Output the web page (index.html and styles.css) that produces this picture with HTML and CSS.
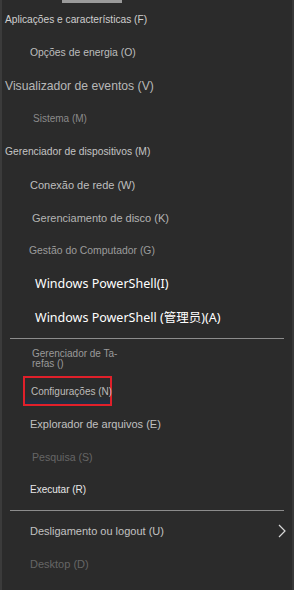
FILE: index.html
```html
<!DOCTYPE html>
<html lang="pt">

<head>
    <meta charset="UTF-8">
    <meta name="viewport" content="width=device-width, initial-scale=1.0">
    <title>Menu</title>
    <link rel="stylesheet" href="styles.css">
</head>

<body>
    <div class="menu">
        <div class="top-bar"></div>

        <div class="item item-f">Aplicações e características (F)</div>
        <div class="item item-o">Opções de energia (O)</div>
        <div class="item item-v">Visualizador de eventos (V)</div>
        <div class="item item-m">Sistema (M)</div>
        <div class="item item-dm">Gerenciador de dispositivos (M)</div>
        <div class="item item-w">Conexão de rede (W)</div>
        <div class="item item-k">Gerenciamento de disco (K)</div>
        <div class="item item-g">Gestão do Computador (G)</div>
        <div class="item item-ps">Windows PowerShell(I)</div>
        <div class="item item-ps">Windows PowerShell (管理员)(A)</div>

        <div class="separator"></div>

        <div class="item item-t">Gerenciador de Ta-<br>refas ()</div>
        <div class="item item-n">
            <span class="selected">Configurações (N)</span>
        </div>
        <div class="item item-e">Explorador de arquivos (E)</div>
        <div class="item item-s">Pesquisa (S)</div>
        <div class="item item-r">Executar (R)</div>

        <div class="separator separator-low"></div>

        <div class="item item-u">
            <span>Desligamento ou logout (U)</span>
            <svg class="chevron" width="8" height="14" viewBox="0 0 8 14">
                <path d="M1 1 L7 7 L1 13" fill="none" stroke="#d8d8d8" stroke-width="1.2"/>
            </svg>
        </div>
        <div class="item item-d">Desktop (D)</div>
    </div>
</body>

</html>
```

FILE: styles.css
```css
body {
    margin: 0;
    padding: 0;
    background-color: #2b2b2b;
    font-family: "Liberation Sans", Arial, sans-serif;
}

.menu {
    width: 294px;
    height: 590px;
    box-sizing: border-box;
    background-color: #2b2b2b;
    border-left: 2px solid #3b3b3b;
    border-right: 2px solid #383838;
    display: flex;
    flex-direction: column;
    overflow: hidden;
}

.top-bar {
    width: 60px;
    height: 3px;
    margin-left: 60px;
    background-color: #9a9a9a;
}

.item {
    height: 33px;
    display: flex;
    align-items: center;
    font-size: 10px;
    color: #c8c8c8;
    white-space: nowrap;
    flex-shrink: 0;
}

.item-f {
    padding-left: 3px;
    font-size: 10.2px;
    color: #cfcfcf;
}

.item-o {
    padding-left: 28px;
    font-size: 10.4px;
    color: #bdbdbd;
}

.item-v {
    padding-left: 3px;
    font-size: 12.2px;
    color: #b8b8b8;
}

.item-m {
    padding-left: 31px;
    font-size: 10px;
    color: #8a8a8a;
}

.item-dm {
    padding-left: 3px;
    font-size: 10.3px;
    color: #c4c4c4;
}

.item-w {
    padding-left: 28px;
    font-size: 11px;
    color: #bfbfbf;
}

.item-k {
    padding-left: 30px;
    font-size: 11px;
    color: #b4b4b4;
}

.item-g {
    padding-left: 27px;
    font-size: 10.4px;
    color: #9c9c9c;
}

.item-ps {
    padding-left: 33px;
    font-family: "Noto Sans", "Noto Sans CJK SC", sans-serif;
    font-size: 12.5px;
    color: #ffffff;
}

.separator {
    height: 1px;
    margin: 5px 8px 5px 8px;
    background-color: #8c8c8c;
    flex-shrink: 0;
}

.separator-low {
    margin-top: 4px;
    margin-bottom: 3px;
}

.item-t {
    height: 30px;
    padding-left: 30px;
    line-height: 10px;
    color: #9a9a9a;
    white-space: normal;
}

.item-n {
    padding-left: 21px;
}

.selected {
    display: block;
    width: 74px;
    padding: 8px 5px 7px 6px;
    border: 2px solid #e0202a;
    color: #bcbcbc;
    background: linear-gradient(to bottom, transparent 70%, #1f2f48 100%);
}

.item-e {
    padding-left: 28px;
    font-size: 11px;
    color: #c0c0c0;
}

.item-s {
    padding-left: 30px;
    font-size: 10.6px;
    color: #666666;
}

.item-r {
    padding-left: 28px;
    color: #e8e8e8;
}

.item-u {
    padding-left: 28px;
    padding-right: 6px;
    font-size: 11px;
    color: #c2c2c2;
    justify-content: space-between;
}

.item-d {
    padding-left: 28px;
    font-size: 11px;
    color: #666666;
}
```
